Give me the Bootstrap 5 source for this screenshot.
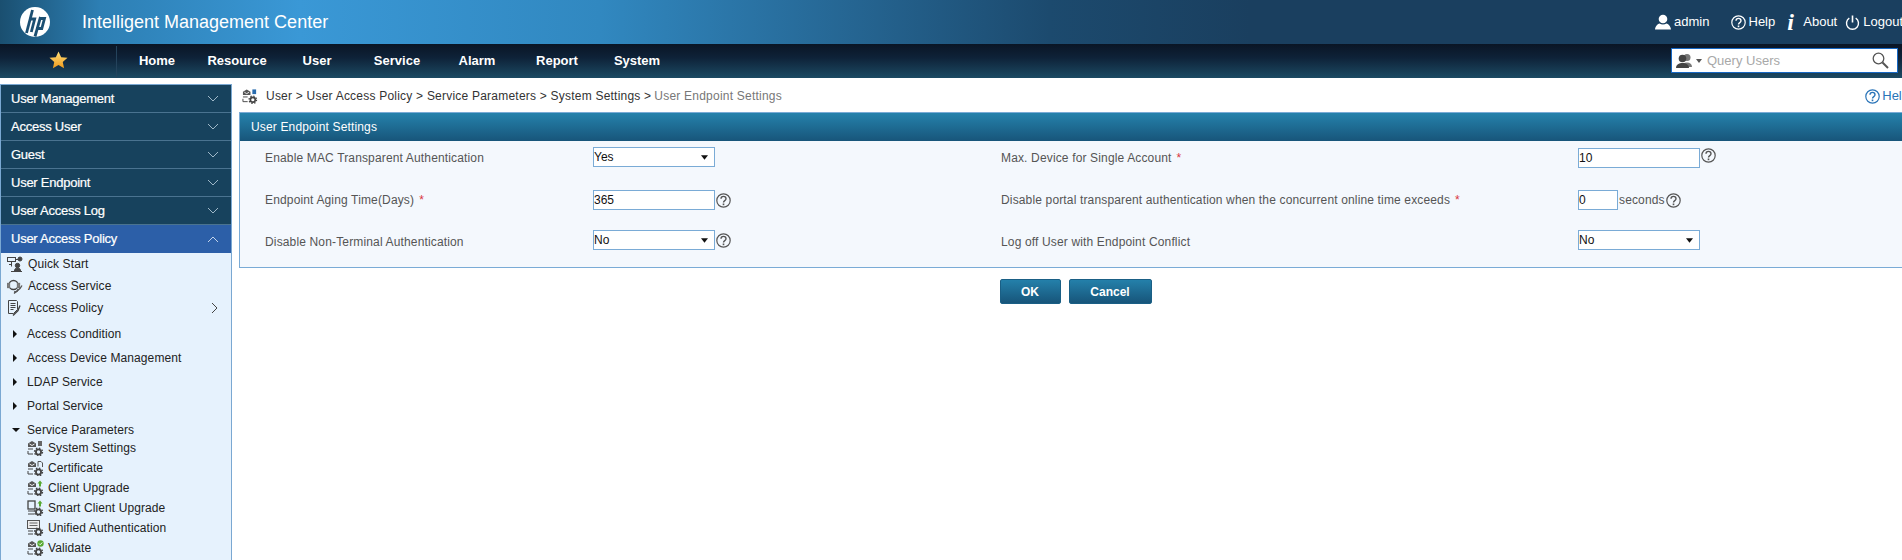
<!DOCTYPE html>
<html lang="en">
<head>
  <meta charset="UTF-8">
  <title>Intelligent Management Center</title>
  <link href="https://cdn.jsdelivr.net/npm/bootstrap@5.3.0/dist/css/bootstrap.min.css" rel="stylesheet">
  <style>
    html, body { height: 100%; overflow: hidden; }
    body { font-family: "Liberation Sans", Arial, sans-serif; font-size: 12px; color: #333; background: #fff; }
    .imc-shell { width: 1912px; height: 100%; display: flex; flex-direction: column; }

    /* top bar */
    .imc-top { height: 44px; flex: none; color: #fff; background: linear-gradient(90deg, #1a4f70 0, #2d7fb4 100px, #3a98d6 300px, #3188c0 600px, #1c4a6e 1050px, #1a3f5f 1250px); }
    .imc-logo { margin-left: 20px; width: 30px; height: 30px; }
    .imc-title { margin-left: 32px; padding-top: 1px; font-size: 18px; }
    .imc-tools { margin-left: auto; padding-right: 9px; font-size: 13px; }
    .imc-tool { display: flex; align-items: center; gap: 3px; color: #fff; text-decoration: none; }
    .imc-tool svg { display: block; }
    .imc-tool-help { margin-left: 21px; }
    .imc-tool-about { margin-left: 12px; gap: 2px; }
    .imc-tool-out { margin-left: 8px; }
    .imc-info { font-family: "Liberation Serif", serif; font-style: italic; font-size: 24px; font-weight: bold; line-height: 1; width: 14px; }

    /* menu bar */
    .imc-menu { height: 34px; flex: none; padding: 0; align-items: flex-start; flex-wrap: nowrap; background: linear-gradient(180deg, #0a1525 0, #0e2238 40%, #1c4a63 100%); }
    .imc-fav { width: 117px; height: 32px; margin-top: 2px; border-right: 1px solid #24435c; display: flex; justify-content: center; padding-top: 5px; }
    .imc-menu .nav-link { width: 80px; height: 34px; padding: 0; line-height: 34px; text-align: center; color: #fff; font-size: 13px; font-weight: bold; }
    .imc-search { margin: 4px 14px 0 auto; width: 227px; height: 25px; background: #fff; border: 1px solid #1768c4; display: flex; align-items: center; padding: 0 8px 0 4px; }
    .imc-search .form-control { border: 0; padding: 0 0 0 5px; height: 20px; font-size: 13px; border-radius: 0; box-shadow: none; flex: 1; min-width: 0; }
    .imc-search .form-control::placeholder { color: #a8a8a8; }
    .imc-caret { width: 0; height: 0; border: 3.5px solid transparent; border-top: 4px solid #555; border-bottom: 0; margin-left: 3px; }

    /* sidebar */
    .imc-main { flex: 1; min-height: 0; display: flex; padding-top: 6px; }
    .imc-side { width: 232px; flex: none; background: #e6f2fd; border: 1px solid #7aa8d2; border-width: 1px 1px 0 1px; }
    .imc-group { height: 28px; display: flex; align-items: center; justify-content: space-between; padding: 0 12px 0 10px; color: #fff; background: #17425d; border-bottom: 1px solid #4a7390; font-size: 13px; letter-spacing: -.25px; -webkit-text-stroke: .2px #fff; }
    .imc-group.imc-open { background: #2c5fa8; border-bottom: 0; }
    .imc-row { display: flex; align-items: center; height: 22px; padding-left: 6px; letter-spacing: .1px; color: #222; }
    .imc-row svg { flex: none; margin-right: 5px; }
    .imc-row-last { justify-content: space-between; padding-right: 8px; }
    .imc-row-last span { flex: 1; }
    .imc-tree { margin-top: 3px; }
    .imc-node { display: flex; align-items: center; height: 24px; padding-left: 12px; letter-spacing: .1px; color: #222; }
    .imc-arrow { width: 0; height: 0; border: 4px solid transparent; border-left: 4px solid #111; border-right: 0; margin-right: 10px; }
    .imc-arrow-down { border: 4px solid transparent; border-top: 4px solid #111; border-bottom: 0; margin-left: -1px; margin-right: 7px; }
    .imc-kids { margin-top: -4px; padding-left: 26px; }
    .imc-kid { display: flex; align-items: center; height: 20px; letter-spacing: .1px; color: #222; }
    .imc-kid svg { flex: none; margin-right: 4px; }

    /* content */
    .imc-content { flex: 1; min-width: 0; padding-left: 7px; }
    .imc-crumb { height: 28px; padding-bottom: 4px; display: flex; align-items: center; font-size: 12px; letter-spacing: .22px; color: #333; }
    .imc-crumb-icon { margin: 0 8px 0 3px; }
    .imc-crumb .imc-here { color: #777; margin-left: 3px; }
    .imc-help { margin-left: auto; margin-right: 3px; color: #2a74b8; display: flex; align-items: center; gap: 2px; font-size: 13px; letter-spacing: 0; }
    .imc-panel { border: 1px solid #7aabd6; border-radius: 0; background: #f4f8fd; }
    .imc-panel .card-header { height: 28px; padding: 0 0 0 11px; line-height: 28px; color: #fff; font-size: 12px; letter-spacing: .15px; border: 0; border-radius: 0; background: linear-gradient(180deg, #2582ac 0, #17557a 100%); }
    .imc-form { display: grid; grid-template-columns: 328px 408px 577px 1fr; grid-auto-rows: 34px; row-gap: 8px; padding: 0 0 8px 25px; }
    .imc-cell { display: flex; align-items: center; color: #555; letter-spacing: .15px; white-space: nowrap; }
    .imc-star { color: #d9363e; margin-left: 5px; }
    .imc-up1 { padding-bottom: 2px; }
    .imc-up2 { padding-bottom: 4px; }
    .imc-form .form-control, .imc-form .form-select { height: 20px; min-height: 0; width: 122px; padding: 0; font-size: 12px; line-height: 16px; color: #111; border: 1px solid #7aabd6; border-radius: 0; box-shadow: none; }
    .imc-form .form-select { background-size: 7px 5px; background-position: right 6px center; background-image: url("data:image/svg+xml,%3csvg xmlns='http://www.w3.org/2000/svg' viewBox='0 0 9 6'%3e%3cpath fill='%23111' d='M0 0h9L4.500 6z'/%3e%3c/svg%3e"); }
    .imc-form .imc-wide { width: 122px; }
    .imc-form .imc-short { width: 40px; }
    .imc-q { flex: none; margin-left: 1px; }
    .imc-q-top { align-self: flex-start; margin-top: 7px; margin-left: 1px; }
    .imc-btns { margin-top: 11px; }
    .imc-btn { height: 25px; padding: 0; font-size: 12px; font-weight: bold; color: #fff; border: 1px solid #1a5f85; border-radius: 2px; background: linear-gradient(180deg, #2480aa 0, #17557a 100%); }
    .imc-btn:hover { color: #fff; }
    .imc-ok { width: 61px; }
    .imc-cancel { width: 83px; }
  </style>
</head>
<body>
  <svg width="0" height="0" class="d-block position-absolute">
    <defs>
      <g id="i-gear">
        <circle cx="11.500" cy="12" r="2.600" fill="none" stroke="#444" stroke-width="1.800"/>
        <circle cx="11.500" cy="12" r="4" fill="none" stroke="#444" stroke-width="1.300" stroke-dasharray="1.500 1.640"/>
      </g>
      <g id="i-box">
        <path d="M1 3.500 5 1l4 2.500V7H1z" fill="#555"/>
        <path d="M2.500 4l2.500 1.500L7.500 4" fill="none" stroke="#fff" stroke-width=".9"/>
        <path d="M1 9h5M1 11v3h5" fill="none" stroke="#444"/>
      </g>
      <symbol id="i-help" viewBox="0 0 15 15">
        <circle cx="7.500" cy="7.500" r="6.700" fill="none" stroke="currentColor" stroke-width="1.200"/>
        <path d="M5 5.700c0-3.100 5-3.100 5 0 0 2-2.500 1.900-2.500 3.900" fill="none" stroke="currentColor" stroke-width="1.400"/>
        <rect x="6.700" y="10.500" width="1.600" height="1.700" fill="currentColor"/>
      </symbol>
      <symbol id="i-chev" viewBox="0 0 12 7"><path d="M1 1l5 5 5-5" fill="none" stroke="#9fb8c8"/></symbol>
    </defs>
  </svg>

  <div class="imc-shell">
    <header class="imc-top d-flex align-items-center">
      <svg class="imc-logo" viewBox="0 0 30 30">
        <circle cx="15" cy="15" r="15" fill="#fff"/>
        <g fill="none" stroke="#1c4f72" stroke-width="2.800">
          <path d="M12.500 3 6.500 26"/>
          <path d="M9.500 12h5.200l-3.400 13"/>
          <path d="M20.500 10 15 29.500"/>
          <path d="M19.500 11.500h5l-2.700 10h-5.300"/>
        </g>
      </svg>
      <div class="imc-title">Intelligent Management Center</div>
      <div class="imc-tools d-flex align-items-center">
        <a class="imc-tool" href="#">
          <svg width="16" height="16" viewBox="0 0 16 16"><circle cx="8" cy="5" r="4.300" fill="#fff"/><path d="M0 15.500c.5-4 3-5.500 4.500-6 2 1.300 5 1.300 7 0 1.500.5 4 2 4.500 6z" fill="#fff"/></svg>
          admin
        </a>
        <a class="imc-tool imc-tool-help" href="#">
          <svg width="15" height="15"><use href="#i-help"/></svg>
          Help
        </a>
        <a class="imc-tool imc-tool-about" href="#"><span class="imc-info">i</span><span>About</span></a>
        <a class="imc-tool imc-tool-out" href="#">
          <svg width="15" height="15" viewBox="0 0 15 15"><path d="M4.300 3.200a6 6 0 1 0 6.400 0" fill="none" stroke="#fff" stroke-width="1.400"/><path d="M7.500.5v7" stroke="#fff" stroke-width="1.600"/></svg>
          Logout
        </a>
      </div>
    </header>

    <nav class="navbar navbar-expand imc-menu">
      <div class="imc-fav">
        <svg width="19" height="18" viewBox="0 0 20 19"><defs><linearGradient id="g-star" x1="0" y1="0" x2="0" y2="1"><stop offset="0" stop-color="#ffe07a"/><stop offset="1" stop-color="#f09a1c"/></linearGradient></defs><path d="M10 .5l2.800 6 6.700.7-5 4.500 1.400 6.500-5.900-3.400-5.900 3.400 1.400-6.500-5-4.500 6.700-.7z" fill="url(#g-star)"/></svg>
      </div>
      <ul class="navbar-nav">
        <li class="nav-item"><a class="nav-link" href="#">Home</a></li>
        <li class="nav-item"><a class="nav-link" href="#">Resource</a></li>
        <li class="nav-item"><a class="nav-link" href="#">User</a></li>
        <li class="nav-item"><a class="nav-link" href="#">Service</a></li>
        <li class="nav-item"><a class="nav-link" href="#">Alarm</a></li>
        <li class="nav-item"><a class="nav-link" href="#">Report</a></li>
        <li class="nav-item"><a class="nav-link" href="#">System</a></li>
      </ul>
      <div class="imc-search">
        <svg width="17" height="16" viewBox="0 0 17 16"><circle cx="11" cy="4.500" r="3.500" fill="#777"/><path d="M6 14c0-3 2-4.500 5-4.500s5 1.500 5 4.500z" fill="#777"/><circle cx="6.500" cy="5.500" r="3.800" fill="#444"/><path d="M0 15c0-3.500 3-5 6.500-5s6.500 1.500 6.500 5z" fill="#444"/></svg>
        <span class="imc-caret"></span>
        <input class="form-control" type="text" placeholder="Query Users">
        <svg width="17" height="17" viewBox="0 0 17 17"><circle cx="6.500" cy="6.500" r="5.300" fill="none" stroke="#555" stroke-width="1.300"/><path d="M10.500 10.500l5.500 5.500" stroke="#555" stroke-width="2"/></svg>
      </div>
    </nav>

    <div class="imc-main">
      <aside class="imc-side">
        <div class="imc-group"><span>User Management</span><svg width="12" height="7"><use href="#i-chev"/></svg></div>
        <div class="imc-group"><span>Access User</span><svg width="12" height="7"><use href="#i-chev"/></svg></div>
        <div class="imc-group"><span>Guest</span><svg width="12" height="7"><use href="#i-chev"/></svg></div>
        <div class="imc-group"><span>User Endpoint</span><svg width="12" height="7"><use href="#i-chev"/></svg></div>
        <div class="imc-group"><span>User Access Log</span><svg width="12" height="7"><use href="#i-chev"/></svg></div>
        <div class="imc-group imc-open"><span>User Access Policy</span><svg width="12" height="7" viewBox="0 0 12 7"><path d="M1 6l5-5 5 5" fill="none" stroke="#c3d4ea"/></svg></div>

        <div class="imc-row">
          <svg width="16" height="16" viewBox="0 0 16 16" fill="none" stroke="#444"><rect x=".5" y="1.500" width="8" height="4"/><path d="M4.500 5.500v5M8.500 3.500h3M2 8.500h3"/><circle cx="13" cy="3" r="2" fill="#444"/><path d="M11 15.500v-3h-1M4 15.500h11" /><circle cx="10.500" cy="9.500" r="2.200" fill="#444"/><path d="M7.500 15c0-2 1-3 3-3s3 1 3 3z" fill="#444"/></svg>
          <span>Quick Start</span>
        </div>
        <div class="imc-row">
          <svg width="16" height="16" viewBox="0 0 16 16" fill="none" stroke="#444" stroke-width="1.300"><circle cx="6.500" cy="7" r="4.500"/><rect x=".5" y="5.500" width="2" height="4" fill="#888" stroke="#777"/><rect x="10.500" y="5.500" width="2" height="4" fill="#888" stroke="#777"/><path d="M11 11c0 2-2 3-4 3"/><path d="M7 15.500l6-5 2-3" stroke="#555"/></svg>
          <span>Access Service</span>
        </div>
        <div class="imc-row imc-row-last">
          <svg width="16" height="16" viewBox="0 0 16 16" fill="none" stroke="#444"><path d="M1.500.5h8l1 1v8l-4 4h-5z"/><path d="M3.500 3.500h5M3.500 5.500h5M3.500 7.500h5M3.500 9.500h3"/><path d="M6 15.500l5-5 2-5" stroke-width="1.400"/></svg>
          <span>Access Policy</span>
          <svg width="7" height="12" viewBox="0 0 7 12"><path d="M1 1l5 5-5 5" fill="none" stroke="#444"/></svg>
        </div>

        <div class="imc-tree">
          <div class="imc-node"><i class="imc-arrow"></i>Access Condition</div>
          <div class="imc-node"><i class="imc-arrow"></i>Access Device Management</div>
          <div class="imc-node"><i class="imc-arrow"></i>LDAP Service</div>
          <div class="imc-node"><i class="imc-arrow"></i>Portal Service</div>
          <div class="imc-node"><i class="imc-arrow-down"></i>Service Parameters</div>
          <div class="imc-kids">
            <div class="imc-kid">
              <svg width="17" height="16" viewBox="0 0 17 16"><use href="#i-box"/><use href="#i-gear"/><rect x="11" y="1" width="4" height="5" fill="#666"/></svg>
              <span>System Settings</span>
            </div>
            <div class="imc-kid">
              <svg width="17" height="16" viewBox="0 0 17 16"><use href="#i-box"/><use href="#i-gear"/><path d="M11 6.500V1.500h3l1.500 1.500v4" fill="none" stroke="#555"/></svg>
              <span>Certificate</span>
            </div>
            <div class="imc-kid">
              <svg width="17" height="16" viewBox="0 0 17 16"><use href="#i-box"/><use href="#i-gear"/><path d="M13 .5l2.500 3h-1.500v3h-2v-3h-1.500z" fill="#57a832"/></svg>
              <span>Client Upgrade</span>
            </div>
            <div class="imc-kid">
              <svg width="17" height="16" viewBox="0 0 17 16"><rect x="1" y="1" width="7" height="8" fill="none" stroke="#444" stroke-width="1.300"/><path d="M1 11h6M1 14h6" stroke="#444"/><use href="#i-gear"/><path d="M13 .5l2.500 3h-1.500v3h-2v-3h-1.500z" fill="#57a832"/></svg>
              <span>Smart Client Upgrade</span>
            </div>
            <div class="imc-kid">
              <svg width="17" height="16" viewBox="0 0 17 16"><rect x=".5" y=".5" width="12" height="8" fill="#eee" stroke="#555"/><path d="M2.500 3h8M2.500 5.500h8" stroke="#666"/><path d="M1 11h5M1 14h5" stroke="#444"/><use href="#i-gear"/></svg>
              <span>Unified Authentication</span>
            </div>
            <div class="imc-kid">
              <svg width="17" height="16" viewBox="0 0 17 16"><use href="#i-box"/><use href="#i-gear"/><circle cx="13.500" cy="3.500" r="3.200" fill="#57a832"/><path d="M12 3.500l1.200 1.200 2-2.200" fill="none" stroke="#fff"/></svg>
              <span>Validate</span>
            </div>
          </div>
        </div>
      </aside>

      <main class="imc-content">
        <div class="imc-crumb">
          <svg class="imc-crumb-icon" width="16" height="16" viewBox="0 0 17 16"><use href="#i-box"/><use href="#i-gear"/><rect x="11" y="1" width="4" height="5" fill="#2a6cae"/></svg>
          <span>User &gt; User Access Policy &gt; Service Parameters &gt; System Settings &gt;</span>
          <span class="imc-here">User Endpoint Settings</span>
          <span class="imc-help">
            <svg width="15" height="15"><use href="#i-help"/></svg>Help
          </span>
        </div>

        <div class="card imc-panel">
          <div class="card-header">User Endpoint Settings</div>
          <form class="imc-form">
            <div class="imc-cell">Enable MAC Transparent Authentication</div>
            <div class="imc-cell imc-up1">
              <select class="form-select"><option>Yes</option><option>No</option></select>
            </div>
            <div class="imc-cell">Max. Device for Single Account <span class="imc-star">*</span></div>
            <div class="imc-cell">
              <input class="form-control imc-wide" type="text" value="10">
              <svg class="imc-q-top" width="15" height="15" color="#555"><use href="#i-help"/></svg>
            </div>

            <div class="imc-cell">Endpoint Aging Time(Days) <span class="imc-star">*</span></div>
            <div class="imc-cell">
              <input class="form-control" type="text" value="365">
              <svg class="imc-q" width="15" height="15" color="#555"><use href="#i-help"/></svg>
            </div>
            <div class="imc-cell">Disable portal transparent authentication when the concurrent online time exceeds <span class="imc-star">*</span></div>
            <div class="imc-cell">
              <input class="form-control imc-short" type="text" value="0">
              <span class="imc-q">seconds</span>
              <svg class="imc-q" width="15" height="15" color="#555"><use href="#i-help"/></svg>
            </div>

            <div class="imc-cell">Disable Non-Terminal Authentication</div>
            <div class="imc-cell imc-up2">
              <select class="form-select"><option>No</option><option>Yes</option></select>
              <svg class="imc-q" width="15" height="15" color="#555"><use href="#i-help"/></svg>
            </div>
            <div class="imc-cell">Log off User with Endpoint Conflict</div>
            <div class="imc-cell imc-up2">
              <select class="form-select"><option>No</option><option>Yes</option></select>
            </div>
          </form>
        </div>

        <div class="imc-btns d-flex justify-content-center gap-2">
          <button type="button" class="btn imc-btn imc-ok">OK</button>
          <button type="button" class="btn imc-btn imc-cancel">Cancel</button>
        </div>
      </main>
    </div>
  </div>
  <script src="https://cdn.jsdelivr.net/npm/bootstrap@5.3.0/dist/js/bootstrap.bundle.min.js"></script>
</body>
</html>
